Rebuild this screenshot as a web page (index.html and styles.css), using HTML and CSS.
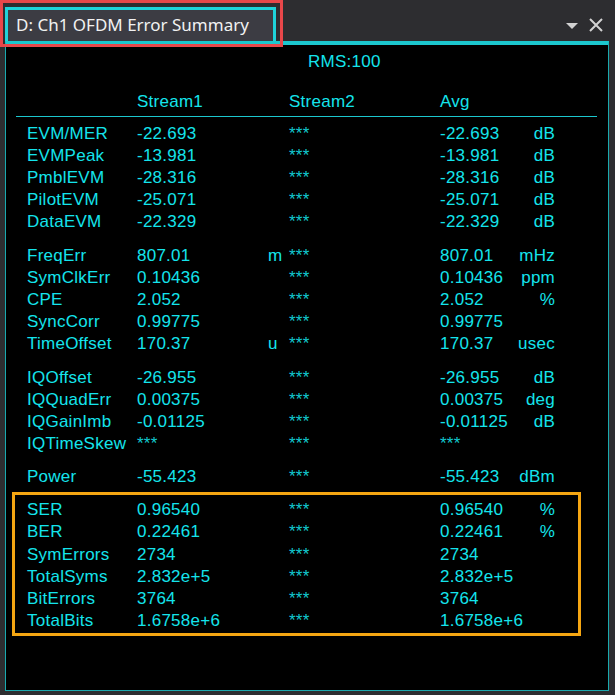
FILE: index.html
```html
<!DOCTYPE html>
<html lang="en">
<head>
    <meta charset="UTF-8">
    <meta name="viewport" content="width=device-width, initial-scale=1.0">
    <title>D: Ch1 OFDM Error Summary</title>
    <link rel="stylesheet" href="styles.css">
</head>
<body>
    <div class="window">
        <div class="titlebar">
            <div class="tab">D: Ch1 OFDM Error Summary</div>
            <div class="controls">
                <svg class="drop" width="12" height="7" viewBox="0 0 12 7">
                    <polygon points="0,0 12,0 6,6"></polygon>
                </svg>
                <svg class="close" width="14" height="14" viewBox="0 0 14 14">
                    <path d="M1,1 L13,13 M13,1 L1,13"></path>
                </svg>
            </div>
        </div>

        <div class="panel">
            <div class="rms">RMS:100</div>
            <div class="row head">
                <span></span><span>Stream1</span><span></span><span>Stream2</span><span>Avg</span><span></span>
            </div>
            <div class="rule"></div>

            <div class="group">
                <div class="row"><span>EVM/MER</span><span>-22.693</span><span></span><span class="na">***</span><span>-22.693</span><span class="unit">dB</span></div>
                <div class="row"><span>EVMPeak</span><span>-13.981</span><span></span><span class="na">***</span><span>-13.981</span><span class="unit">dB</span></div>
                <div class="row"><span>PmblEVM</span><span>-28.316</span><span></span><span class="na">***</span><span>-28.316</span><span class="unit">dB</span></div>
                <div class="row"><span>PilotEVM</span><span>-25.071</span><span></span><span class="na">***</span><span>-25.071</span><span class="unit">dB</span></div>
                <div class="row"><span>DataEVM</span><span>-22.329</span><span></span><span class="na">***</span><span>-22.329</span><span class="unit">dB</span></div>
            </div>

            <div class="group">
                <div class="row"><span>FreqErr</span><span>807.01</span><span>m</span><span class="na">***</span><span>807.01</span><span class="unit">mHz</span></div>
                <div class="row"><span>SymClkErr</span><span>0.10436</span><span></span><span class="na">***</span><span>0.10436</span><span class="unit">ppm</span></div>
                <div class="row"><span>CPE</span><span>2.052</span><span></span><span class="na">***</span><span>2.052</span><span class="unit">%</span></div>
                <div class="row"><span>SyncCorr</span><span>0.99775</span><span></span><span class="na">***</span><span>0.99775</span><span class="unit"></span></div>
                <div class="row"><span>TimeOffset</span><span>170.37</span><span>u</span><span class="na">***</span><span>170.37</span><span class="unit">usec</span></div>
            </div>

            <div class="group">
                <div class="row"><span>IQOffset</span><span>-26.955</span><span></span><span class="na">***</span><span>-26.955</span><span class="unit">dB</span></div>
                <div class="row"><span>IQQuadErr</span><span>0.00375</span><span></span><span class="na">***</span><span>0.00375</span><span class="unit">deg</span></div>
                <div class="row"><span>IQGainImb</span><span>-0.01125</span><span></span><span class="na">***</span><span>-0.01125</span><span class="unit">dB</span></div>
                <div class="row"><span>IQTimeSkew</span><span class="na">***</span><span></span><span class="na">***</span><span class="na">***</span><span class="unit"></span></div>
            </div>

            <div class="group">
                <div class="row"><span>Power</span><span>-55.423</span><span></span><span class="na">***</span><span>-55.423</span><span class="unit">dBm</span></div>
            </div>

            <div class="group marked">
                <div class="row"><span>SER</span><span>0.96540</span><span></span><span class="na">***</span><span>0.96540</span><span class="unit">%</span></div>
                <div class="row"><span>BER</span><span>0.22461</span><span></span><span class="na">***</span><span>0.22461</span><span class="unit">%</span></div>
                <div class="row"><span>SymErrors</span><span>2734</span><span></span><span class="na">***</span><span>2734</span><span class="unit"></span></div>
                <div class="row"><span>TotalSyms</span><span>2.832e+5</span><span></span><span class="na">***</span><span>2.832e+5</span><span class="unit"></span></div>
                <div class="row"><span>BitErrors</span><span>3764</span><span></span><span class="na">***</span><span>3764</span><span class="unit"></span></div>
                <div class="row"><span>TotalBits</span><span>1.6758e+6</span><span></span><span class="na">***</span><span>1.6758e+6</span><span class="unit"></span></div>
            </div>
        </div>

        <!-- red highlight drawn over the tab -->
        <div class="callout"></div>
    </div>
</body>
</html>
```

FILE: styles.css
```css
html, body {
    margin: 0;
    padding: 0;
}
body {
    background: #2d2d30;
}
.window {
    position: relative;
    display: flex;
    flex-direction: column;
    height: 695px;
    width: 615px;
}

/* title bar */
.titlebar {
    display: flex;
    align-items: flex-end;
    height: 41px;
    flex-shrink: 0;
}
.tab {
    box-sizing: border-box;
    height: 34px;
    width: 271px;
    margin-left: 5px;
    padding: 3px 0 0 8px;
    border: 3px solid #1fd3da;
    border-bottom: none;
    background: #3c3c43;
    color: #f1f1f1;
    font-family: "Noto Sans", "Open Sans", sans-serif;
    font-size: 17px;
    line-height: 23px;
    white-space: nowrap;
}
.controls {
    display: flex;
    align-items: center;
    gap: 11px;
    margin-left: auto;
    margin-right: 12px;
    height: 41px;
    padding-top: 8px;
    box-sizing: border-box;
}
.drop {
    fill: #d2d2d2;
    margin-top: 4px;
}
.close {
    fill: none;
    stroke: #d2d2d2;
    stroke-width: 2;
}

/* data panel */
.panel {
    flex: 1;
    margin: 0 6px 4px 5px;
    border: 1px solid #1aa9ae;
    border-top: 4px solid #1cc7ce;
    background: #000;
    color: #14e4ec;
    font-family: "Liberation Sans", Arial, sans-serif;
    font-size: 17px;
    letter-spacing: 0.25px;
    padding-top: 6px;
}
.rms {
    line-height: 22.2px;
    padding-left: 302px;
}
.row {
    display: grid;
    grid-template-columns: 110px 131px 21px 151px 70px 45px;
    line-height: 22.2px;
    white-space: nowrap;
}
.row.head {
    margin-top: 17.8px;
    padding-left: 21px;
}
.unit {
    text-align: right;
}
.na {
    color: #12c9cf;
}
.rule {
    height: 1px;
    background: #1cc7ce;
    margin: 2.4px 11px 0 10px;
}
.group {
    padding-left: 21px;
    margin-top: 11px;
}
.rule + .group {
    margin-top: 6px;
}
.group.marked {
    margin: 3.5px 27px 0 6px;
    border: 3px solid #f5a612;
    padding: 4px 0 0.8px 12px;
}

/* annotation box */
.callout {
    position: absolute;
    top: 0;
    left: 0;
    width: 283px;
    height: 47px;
    box-sizing: border-box;
    border: 3px solid #e8474a;
    pointer-events: none;
}
```
